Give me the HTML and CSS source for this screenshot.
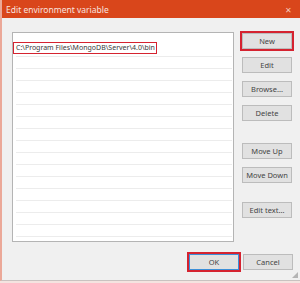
FILE: index.html
```html
<!DOCTYPE html>
<html lang="en">
<head>
    <meta charset="UTF-8">
    <title>Edit environment variable</title>
    <link rel="stylesheet" href="styles.css">
</head>
<body>
    <div class="window">
        <div class="titlebar">
            <span class="title">Edit environment variable</span>
            <span class="close">&#x2715;</span>
        </div>

        <div class="content">
            <div class="main-row">
                <div class="list">
                    <div class="row selected"><span class="entry">C:\Program Files\MongoDB\Server\4.0\bin</span></div>
                    <div class="row"></div>
                    <div class="row"></div>
                    <div class="row"></div>
                    <div class="row"></div>
                    <div class="row"></div>
                    <div class="row"></div>
                    <div class="row"></div>
                    <div class="row"></div>
                    <div class="row"></div>
                    <div class="row"></div>
                    <div class="row"></div>
                    <div class="row"></div>
                    <div class="row"></div>
                    <div class="row"></div>
                    <div class="row"></div>
                    <div class="row"></div>
                </div>

                <div class="side-buttons">
                    <button class="btn marked">New</button>
                    <button class="btn">Edit</button>
                    <button class="btn">Browse...</button>
                    <button class="btn">Delete</button>
                    <button class="btn group-start">Move Up</button>
                    <button class="btn">Move Down</button>
                    <button class="btn text-start">Edit text...</button>
                </div>
            </div>

            <div class="footer">
                <button class="btn marked default">OK</button>
                <button class="btn">Cancel</button>
            </div>
        </div>
        <div class="grip"></div>
    </div>
</body>
</html>
```

FILE: styles.css
```css
body {
    margin: 0;
    font-family: "Noto Sans", "Open Sans", sans-serif;
    background-color: #f4e4e0;
}

.window {
    position: relative;
    width: 298px;
    height: 280px;
    background-color: #f0f0f0;
    border-left: 2px solid #eba898;
    border-bottom: 1px solid #c9c2c0;
    box-sizing: content-box;
}

.titlebar {
    height: 18px;
    background-color: #d9461b;
    color: #ffffff;
    display: flex;
    align-items: center;
    justify-content: space-between;
    padding: 0 8px 0 4px;
    font-size: 8.5px;
}

.title {
    opacity: 0.85;
}

.close {
    font-size: 8px;
    color: #f6c8b8;
}

.content {
    padding: 14px 0 0 10px;
}

.main-row {
    display: flex;
    gap: 8px;
}

.list {
    width: 220px;
    height: 208px;
    background-color: #ffffff;
    border: 1px solid #b4b4b4;
    overflow: hidden;
}

.row {
    height: 11px;
    margin: 0 1px 0 3px;
    border-bottom: 1px solid #ececec;
}

.row.selected {
    margin-left: 0;
    border-bottom: none;
    height: 12px;
}

.entry {
    display: inline-block;
    height: 10px;
    line-height: 10px;
    padding: 0 1px 0 2px;
    border: 1px solid #d52330;
    font-size: 7px;
    color: #3a3a3a;
}

.side-buttons {
    display: flex;
    flex-direction: column;
    gap: 8px;
    padding-top: 1px;
}

.btn {
    width: 50px;
    height: 16px;
    padding: 0;
    background-color: #e1e1e1;
    border: 1px solid #bcbcbc;
    font-family: inherit;
    font-size: 7.5px;
    color: #444444;
}

.btn.marked {
    outline: 2px solid #d52330;
}

.btn.default {
    border-color: #3c8fd8;
}

.group-start {
    margin-top: 14px;
}

.text-start {
    margin-top: 11px;
}

.footer {
    display: flex;
    justify-content: flex-end;
    gap: 4px;
    padding: 12px 7px 0 0;
}

.grip {
    position: absolute;
    right: 2px;
    bottom: 2px;
    width: 6px;
    height: 6px;
    background: radial-gradient(circle, #b0b0b0 0.7px, transparent 0.8px) 0 0 / 2px 2px;
    clip-path: polygon(100% 0, 100% 100%, 0 100%);
}
```
